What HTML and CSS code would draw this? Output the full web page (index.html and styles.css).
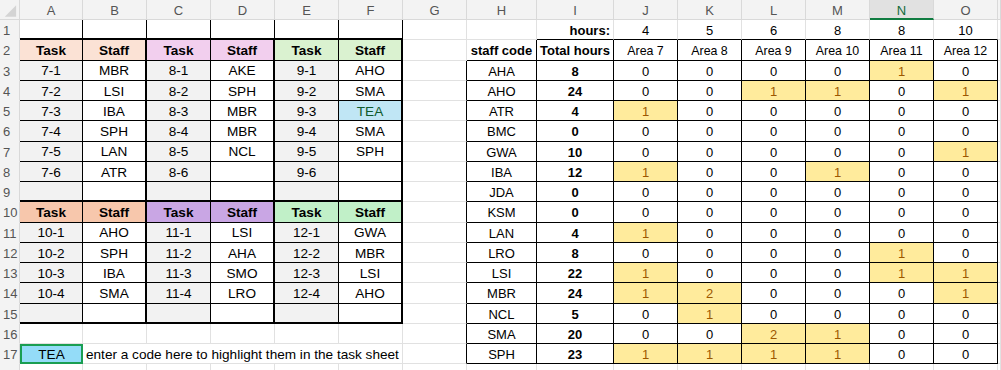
FILE: index.html
```html
<!DOCTYPE html>
<html>
<head>
<meta charset="utf-8">
<link rel="stylesheet" href="styles.css">
</head>
<body>
<div class="sheet">
  <!-- column headers -->
  <div class="c ch corner"><svg width="20" height="20" viewBox="0 0 20 20"><polygon points="5,17 17,17 17,5" fill="#d4d4d4"/></svg></div>
  <div class="c ch">A</div><div class="c ch">B</div><div class="c ch">C</div><div class="c ch">D</div><div class="c ch">E</div><div class="c ch">F</div><div class="c ch">G</div><div class="c ch">H</div><div class="c ch">I</div><div class="c ch">J</div><div class="c ch">K</div><div class="c ch">L</div><div class="c ch">M</div><div class="c ch sel-col">N</div><div class="c ch">O</div><div class="c ch"></div>

  <!-- row 1 -->
  <div class="c rh">1</div>
  <div class="c r1 b2"></div><div class="c r1 b2"></div><div class="c r1 b2"></div><div class="c r1 b2"></div><div class="c r1 b2"></div><div class="c r1 b2"></div>
  <div class="c"></div><div class="c"></div>
  <div class="c bd b1 right">hours:</div>
  <div class="c b1">4</div><div class="c b1">5</div><div class="c b1">6</div><div class="c b1">8</div><div class="c b1">8</div><div class="c b1">10</div><div class="c"></div>

  <!-- row 2 -->
  <div class="c rh">2</div>
  <div class="c L bd f-pe1 r1 b1">Task</div><div class="c L bd f-pe1 r2 b1">Staff</div>
  <div class="c L bd f-pk1 r1 b1">Task</div><div class="c L bd f-pk1 r2 b1">Staff</div>
  <div class="c L bd f-gn1 r1 b1">Task</div><div class="c L bd f-gn1 r2 b1">Staff</div>
  <div class="c"></div>
  <div class="c bd r1 b1">staff code</div><div class="c bd r1 b1">Total hours</div>
  <div class="c r1 b1 ar">Area 7</div><div class="c r1 b1 ar">Area 8</div><div class="c r1 b1 ar">Area 9</div><div class="c r1 b1 ar">Area 10</div><div class="c r1 b1 ar">Area 11</div><div class="c r1 b1 ar">Area 12</div><div class="c"></div>

  <!-- row 3 -->
  <div class="c rh">3</div>
  <div class="c L g r1 b1">7-1</div><div class="c L r2 b1">MBR</div>
  <div class="c L g r1 b1">8-1</div><div class="c L r2 b1">AKE</div>
  <div class="c L g r1 b1">9-1</div><div class="c L r2 b1">AHO</div>
  <div class="c r1"></div>
  <div class="c r1 b1">AHA</div><div class="c bd r1 b1">8</div>
  <div class="c r1 b1">0</div><div class="c r1 b1">0</div><div class="c r1 b1">0</div><div class="c r1 b1">0</div><div class="c r1 b1 hl">1</div><div class="c r1 b1">0</div><div class="c"></div>

  <!-- row 4 -->
  <div class="c rh">4</div>
  <div class="c L g r1 b1">7-2</div><div class="c L r2 b1">LSI</div>
  <div class="c L g r1 b1">8-2</div><div class="c L r2 b1">SPH</div>
  <div class="c L g r1 b1">9-2</div><div class="c L r2 b1">SMA</div>
  <div class="c r1"></div>
  <div class="c r1 b1">AHO</div><div class="c bd r1 b1">24</div>
  <div class="c r1 b1">0</div><div class="c r1 b1">0</div><div class="c r1 b1 hl">1</div><div class="c r1 b1 hl">1</div><div class="c r1 b1">0</div><div class="c r1 b1 hl">1</div><div class="c"></div>

  <!-- row 5 -->
  <div class="c rh">5</div>
  <div class="c L g r1 b1">7-3</div><div class="c L r2 b1">IBA</div>
  <div class="c L g r1 b1">8-3</div><div class="c L r2 b1">MBR</div>
  <div class="c L g r1 b1">9-3</div><div class="c L r2 b1 match">TEA</div>
  <div class="c r1"></div>
  <div class="c r1 b1">ATR</div><div class="c bd r1 b1">4</div>
  <div class="c r1 b1 hl">1</div><div class="c r1 b1">0</div><div class="c r1 b1">0</div><div class="c r1 b1">0</div><div class="c r1 b1">0</div><div class="c r1 b1">0</div><div class="c"></div>

  <!-- row 6 -->
  <div class="c rh">6</div>
  <div class="c L g r1 b1">7-4</div><div class="c L r2 b1">SPH</div>
  <div class="c L g r1 b1">8-4</div><div class="c L r2 b1">MBR</div>
  <div class="c L g r1 b1">9-4</div><div class="c L r2 b1">SMA</div>
  <div class="c r1"></div>
  <div class="c r1 b1">BMC</div><div class="c bd r1 b1">0</div>
  <div class="c r1 b1">0</div><div class="c r1 b1">0</div><div class="c r1 b1">0</div><div class="c r1 b1">0</div><div class="c r1 b1">0</div><div class="c r1 b1">0</div><div class="c"></div>

  <!-- row 7 -->
  <div class="c rh">7</div>
  <div class="c L g r1 b1">7-5</div><div class="c L r2 b1">LAN</div>
  <div class="c L g r1 b1">8-5</div><div class="c L r2 b1">NCL</div>
  <div class="c L g r1 b1">9-5</div><div class="c L r2 b1">SPH</div>
  <div class="c r1"></div>
  <div class="c r1 b1">GWA</div><div class="c bd r1 b1">10</div>
  <div class="c r1 b1">0</div><div class="c r1 b1">0</div><div class="c r1 b1">0</div><div class="c r1 b1">0</div><div class="c r1 b1">0</div><div class="c r1 b1 hl">1</div><div class="c"></div>

  <!-- row 8 -->
  <div class="c rh">8</div>
  <div class="c L g r1 b1">7-6</div><div class="c L r2 b1">ATR</div>
  <div class="c L g r1 b1">8-6</div><div class="c L r2 b1"></div>
  <div class="c L g r1 b1">9-6</div><div class="c L r2 b1"></div>
  <div class="c r1"></div>
  <div class="c r1 b1">IBA</div><div class="c bd r1 b1">12</div>
  <div class="c r1 b1 hl">1</div><div class="c r1 b1">0</div><div class="c r1 b1">0</div><div class="c r1 b1 hl">1</div><div class="c r1 b1">0</div><div class="c r1 b1">0</div><div class="c"></div>

  <!-- row 9 -->
  <div class="c rh">9</div>
  <div class="c L g r1 b2"></div><div class="c L r2 b2"></div>
  <div class="c L g r1 b2"></div><div class="c L r2 b2"></div>
  <div class="c L g r1 b2"></div><div class="c L r2 b2"></div>
  <div class="c r1"></div>
  <div class="c r1 b1">JDA</div><div class="c bd r1 b1">0</div>
  <div class="c r1 b1">0</div><div class="c r1 b1">0</div><div class="c r1 b1">0</div><div class="c r1 b1">0</div><div class="c r1 b1">0</div><div class="c r1 b1">0</div><div class="c"></div>

  <!-- row 10 -->
  <div class="c rh">10</div>
  <div class="c L bd f-pe2 r1 b1">Task</div><div class="c L bd f-pe2 r2 b1">Staff</div>
  <div class="c L bd f-pk2 r1 b1">Task</div><div class="c L bd f-pk2 r2 b1">Staff</div>
  <div class="c L bd f-gn2 r1 b1">Task</div><div class="c L bd f-gn2 r2 b1">Staff</div>
  <div class="c r1"></div>
  <div class="c r1 b1">KSM</div><div class="c bd r1 b1">0</div>
  <div class="c r1 b1">0</div><div class="c r1 b1">0</div><div class="c r1 b1">0</div><div class="c r1 b1">0</div><div class="c r1 b1">0</div><div class="c r1 b1">0</div><div class="c"></div>

  <!-- row 11 -->
  <div class="c rh">11</div>
  <div class="c L g r1 b1">10-1</div><div class="c L r2 b1">AHO</div>
  <div class="c L g r1 b1">11-1</div><div class="c L r2 b1">LSI</div>
  <div class="c L g r1 b1">12-1</div><div class="c L r2 b1">GWA</div>
  <div class="c r1"></div>
  <div class="c r1 b1">LAN</div><div class="c bd r1 b1">4</div>
  <div class="c r1 b1 hl">1</div><div class="c r1 b1">0</div><div class="c r1 b1">0</div><div class="c r1 b1">0</div><div class="c r1 b1">0</div><div class="c r1 b1">0</div><div class="c"></div>

  <!-- row 12 -->
  <div class="c rh">12</div>
  <div class="c L g r1 b1">10-2</div><div class="c L r2 b1">SPH</div>
  <div class="c L g r1 b1">11-2</div><div class="c L r2 b1">AHA</div>
  <div class="c L g r1 b1">12-2</div><div class="c L r2 b1">MBR</div>
  <div class="c r1"></div>
  <div class="c r1 b1">LRO</div><div class="c bd r1 b1">8</div>
  <div class="c r1 b1">0</div><div class="c r1 b1">0</div><div class="c r1 b1">0</div><div class="c r1 b1">0</div><div class="c r1 b1 hl">1</div><div class="c r1 b1">0</div><div class="c"></div>

  <!-- row 13 -->
  <div class="c rh">13</div>
  <div class="c L g r1 b1">10-3</div><div class="c L r2 b1">IBA</div>
  <div class="c L g r1 b1">11-3</div><div class="c L r2 b1">SMO</div>
  <div class="c L g r1 b1">12-3</div><div class="c L r2 b1">LSI</div>
  <div class="c r1"></div>
  <div class="c r1 b1">LSI</div><div class="c bd r1 b1">22</div>
  <div class="c r1 b1 hl">1</div><div class="c r1 b1">0</div><div class="c r1 b1">0</div><div class="c r1 b1">0</div><div class="c r1 b1 hl">1</div><div class="c r1 b1 hl">1</div><div class="c"></div>

  <!-- row 14 -->
  <div class="c rh">14</div>
  <div class="c L g r1 b1">10-4</div><div class="c L r2 b1">SMA</div>
  <div class="c L g r1 b1">11-4</div><div class="c L r2 b1">LRO</div>
  <div class="c L g r1 b1">12-4</div><div class="c L r2 b1">AHO</div>
  <div class="c r1"></div>
  <div class="c r1 b1">MBR</div><div class="c bd r1 b1">24</div>
  <div class="c r1 b1 hl">1</div><div class="c r1 b1 hl">2</div><div class="c r1 b1">0</div><div class="c r1 b1">0</div><div class="c r1 b1">0</div><div class="c r1 b1 hl">1</div><div class="c"></div>

  <!-- row 15 -->
  <div class="c rh">15</div>
  <div class="c L g r1 b2"></div><div class="c L r2 b2"></div>
  <div class="c L g r1 b2"></div><div class="c L r2 b2"></div>
  <div class="c L g r1 b2"></div><div class="c L r2 b2"></div>
  <div class="c r1"></div>
  <div class="c r1 b1">NCL</div><div class="c bd r1 b1">5</div>
  <div class="c r1 b1">0</div><div class="c r1 b1 hl">1</div><div class="c r1 b1">0</div><div class="c r1 b1">0</div><div class="c r1 b1">0</div><div class="c r1 b1">0</div><div class="c"></div>

  <!-- row 16 -->
  <div class="c rh">16</div>
  <div class="c"></div><div class="c"></div><div class="c"></div><div class="c"></div><div class="c"></div><div class="c"></div>
  <div class="c r1"></div>
  <div class="c r1 b1">SMA</div><div class="c bd r1 b1">20</div>
  <div class="c r1 b1">0</div><div class="c r1 b1">0</div><div class="c r1 b1 hl">2</div><div class="c r1 b1 hl">1</div><div class="c r1 b1">0</div><div class="c r1 b1">0</div><div class="c"></div>

  <!-- row 17 -->
  <div class="c rh">17</div>
  <div class="c L active">TEA</div>
  <div class="c L note">enter a code here to highlight them in the task sheet</div>
  <div class="c r1"></div>
  <div class="c r1 b1">SPH</div><div class="c bd r1 b1">23</div>
  <div class="c r1 b1 hl">1</div><div class="c r1 b1 hl">1</div><div class="c r1 b1 hl">1</div><div class="c r1 b1 hl">1</div><div class="c r1 b1">0</div><div class="c r1 b1">0</div><div class="c"></div>

  <!-- row 18 (partially visible) -->
  <div class="c rh"></div>
  <div class="c"></div><div class="c"></div><div class="c"></div><div class="c"></div><div class="c"></div><div class="c"></div><div class="c"></div><div class="c"></div><div class="c"></div><div class="c"></div><div class="c"></div><div class="c"></div><div class="c"></div><div class="c"></div><div class="c"></div><div class="c"></div>
</div>
</body>
</html>
```

FILE: styles.css
```css
* {
  box-sizing: border-box;
  margin: 0;
  padding: 0;
}

html,
body {
  width: 1001px;
  height: 370px;
  overflow: hidden;
  background: #ffffff;
}

body {
  font-family: "Liberation Sans", Arial, sans-serif;
  font-size: 13px;
  color: #000000;
}

.sheet {
  display: grid;
  grid-template-columns: 20px 63px repeat(6, 64px) 70px 77px repeat(6, 64px) 1fr;
  grid-template-rows: 20px repeat(18, 20.25px);
}

.c {
  display: flex;
  align-items: center;
  justify-content: center;
  padding-top: 2px;
  white-space: nowrap;
  line-height: 1;
  border-right: 1px solid #e1e1e1;
  border-bottom: 1px solid #e1e1e1;
}

/* headers */
.ch {
  background: #f3f3f3;
  color: #555555;
  border-right-color: #d9d9d9;
  border-bottom-color: #d9d9d9;
  font-size: 13px;
  padding-top: 1px;
}

.corner {
  padding: 0;
  align-items: stretch;
  justify-content: stretch;
}

.corner svg {
  display: block;
}

.sel-col {
  background: #e1e1e1;
  color: #0f6b3a;
  border-bottom: 2px solid #107c41;
  padding-top: 3px;
}

.rh {
  background: #f3f3f3;
  color: #555555;
  justify-content: flex-start;
  padding-left: 3px;
  border-right-color: #d9d9d9;
  border-bottom-color: #f3f3f3;
  font-size: 13px;
}

/* text */
.L {
  font-size: 13.6px;
}

.bd {
  font-weight: bold;
}

.right {
  justify-content: flex-end;
  padding-right: 3px;
}

.ar {
  font-size: 12.4px;
}

/* borders */
.r1 {
  border-right: 1px solid #000000;
}

.r2 {
  border-right: 2px solid #000000;
}

.b1 {
  border-bottom: 1px solid #000000;
}

.b2 {
  border-bottom: 2px solid #000000;
}

/* fills */
.g {
  background: #f2f2f2;
}

.f-pe1 {
  background: #fbe2d5;
}

.f-pk1 {
  background: #f2cfee;
}

.f-gn1 {
  background: #daf2d0;
}

.f-pe2 {
  background: #f7c7ac;
}

.f-pk2 {
  background: #c9a6e4;
}

.f-gn2 {
  background: #c1f0c8;
}

.match {
  background: #c0e6f5;
  color: #0e5a2c;
}

.hl {
  background: #ffeb9c;
  color: #9c5700;
}

/* row 17 */
.active {
  background: #94dcf8;
  border: 2px solid #1a9e52;
  border-top-width: 2px;
  position: relative;
  z-index: 1;
}

.note {
  grid-column: span 5;
  justify-content: flex-start;
  padding-left: 3px;
}
```
